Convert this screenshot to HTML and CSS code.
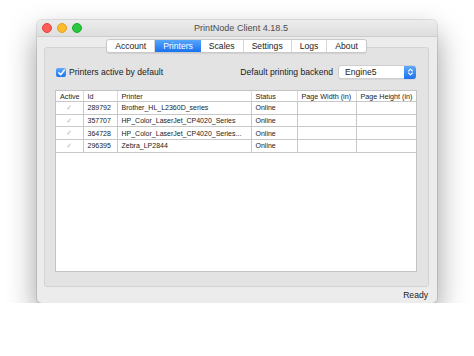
FILE: index.html
```html
<!DOCTYPE html>
<html lang="en">
<head>
    <meta charset="UTF-8">
    <title>PrintNode Client 4.18.5</title>
    <link rel="stylesheet" href="styles.css">
</head>
<body>
    <div class="window">
        <div class="titlebar">
            <div class="lights">
                <span class="light red"></span>
                <span class="light yellow"></span>
                <span class="light green"></span>
            </div>
            <div class="title">PrintNode Client 4.18.5</div>
        </div>

        <div class="content">
            <div class="panel">
                <div class="tabs">
                    <span class="tab">Account</span>
                    <span class="tab active">Printers</span>
                    <span class="tab">Scales</span>
                    <span class="tab">Settings</span>
                    <span class="tab">Logs</span>
                    <span class="tab">About</span>
                </div>

                <div class="options">
                    <label class="check">
                        <span class="checkbox">
                            <svg width="9" height="9" viewBox="0 0 9 9"><path d="M1.8 4.7 L3.7 6.7 L7.4 2" fill="none" stroke="#fff" stroke-width="1.5" stroke-linecap="round" stroke-linejoin="round"/></svg>
                        </span>
                        Printers active by default
                    </label>
                    <div class="backend">
                        <span>Default printing backend</span>
                        <div class="select">
                            <span class="select-value">Engine5</span>
                            <span class="stepper">
                                <svg width="7" height="10" viewBox="0 0 7 10"><path d="M1.6 4 L3.5 2.2 L5.4 4 M1.6 6 L3.5 7.8 L5.4 6" fill="none" stroke="#fff" stroke-width="1.1" stroke-linecap="round" stroke-linejoin="round"/></svg>
                            </span>
                        </div>
                    </div>
                </div>

                <div class="table-wrap">
                    <table class="printers">
                        <colgroup>
                            <col style="width: 27px">
                            <col style="width: 34px">
                            <col style="width: 134px">
                            <col style="width: 46px">
                            <col style="width: 59px">
                            <col>
                        </colgroup>
                        <thead>
                            <tr>
                                <th>Active</th>
                                <th>Id</th>
                                <th>Printer</th>
                                <th>Status</th>
                                <th>Page Width (in)</th>
                                <th>Page Height (in)</th>
                            </tr>
                        </thead>
                        <tbody>
                            <tr>
                                <td class="tick">&#10003;</td>
                                <td>289792</td>
                                <td>Brother_HL_L2360D_series</td>
                                <td>Online</td>
                                <td></td>
                                <td></td>
                            </tr>
                            <tr>
                                <td class="tick">&#10003;</td>
                                <td>357707</td>
                                <td>HP_Color_LaserJet_CP4020_Series</td>
                                <td>Online</td>
                                <td></td>
                                <td></td>
                            </tr>
                            <tr>
                                <td class="tick">&#10003;</td>
                                <td>364728</td>
                                <td>HP_Color_LaserJet_CP4020_Series...</td>
                                <td>Online</td>
                                <td></td>
                                <td></td>
                            </tr>
                            <tr>
                                <td class="tick">&#10003;</td>
                                <td>296395</td>
                                <td>Zebra_LP2844</td>
                                <td>Online</td>
                                <td></td>
                                <td></td>
                            </tr>
                        </tbody>
                    </table>
                </div>
            </div>

            <div class="statusbar">Ready</div>
        </div>
    </div>
</body>
</html>
```

FILE: styles.css
```css
body {
    margin: 0;
    padding: 0;
    background: #fff;
    font-family: "Liberation Sans", Arial, sans-serif;
    font-size: 8.6px;
    color: #1a1a1a;
}
.window {
    width: 400px;
    height: 283px;
    margin: 20px 0 0 37px;
    background: #ececec;
    border-radius: 5px;
    box-shadow: 0 14px 30px rgba(0, 0, 0, 0.4), 0 0 0 1px rgba(0, 0, 0, 0.1);
    display: flex;
    flex-direction: column;
    overflow: hidden;
}
.titlebar {
    height: 16px;
    background: linear-gradient(#ececec, #dedede);
    border-bottom: 1px solid #cdcdcd;
    display: flex;
    align-items: center;
}
.lights {
    display: flex;
    gap: 5px;
    padding-left: 5px;
}
.light {
    width: 8px;
    height: 8px;
    border-radius: 50%;
}
.red { background: #fc5f57; border: 0.5px solid #e0443e; }
.yellow { background: #fdbc2e; border: 0.5px solid #dea123; }
.green { background: #29c840; border: 0.5px solid #1aab29; }
.title {
    flex: 1;
    text-align: center;
    color: #4d4d4d;
    font-size: 9.1px;
    margin-right: 37px;
}
.content {
    flex: 1;
    display: flex;
    flex-direction: column;
}
.panel {
    margin: 10px 8px 0 7px;
    height: 238px;
    background: #e3e3e3;
    border: 1px solid #d3d3d3;
    border-radius: 3px;
    display: flex;
    flex-direction: column;
}
.tabs {
    display: flex;
    align-self: center;
    margin-top: -9px;
    background: #fff;
    border: 1px solid #c8c8c8;
    border-radius: 3px;
    box-shadow: 0 1px 1px rgba(0, 0, 0, 0.08);
    height: 12px;
}
.tab {
    padding: 0 8px;
    line-height: 12px;
    border-right: 1px solid #d6d6d6;
    color: #222;
}
.tab:last-child {
    border-right: none;
}
.tab.active {
    background: linear-gradient(#56a6fb, #1a72f0);
    color: #fff;
    border-right: none;
}
.options {
    display: flex;
    justify-content: space-between;
    align-items: center;
    padding: 12px 12px 0 11px;
    height: 14px;
}
.check {
    display: flex;
    align-items: center;
    gap: 3px;
}
.checkbox {
    width: 10px;
    height: 9px;
    border-radius: 2px;
    background: linear-gradient(#5ea9fa, #1c74ef);
    display: flex;
    align-items: center;
    justify-content: center;
}
.backend {
    display: flex;
    align-items: center;
    gap: 5px;
}
.select {
    width: 76px;
    height: 12px;
    background: #fff;
    border: 1px solid #cfcfcf;
    border-radius: 3px;
    display: flex;
    align-items: center;
    box-shadow: 0 1px 1px rgba(0, 0, 0, 0.06);
}
.select-value {
    flex: 1;
    padding-left: 6px;
}
.stepper {
    width: 12px;
    height: 13px;
    margin-right: -1px;
    background: linear-gradient(#5ea9fa, #1c74ef);
    border-radius: 0 3px 3px 0;
    display: flex;
    align-items: center;
    justify-content: center;
}
.table-wrap {
    margin: 11px 11px 0 10px;
    height: 180px;
    background: #fff;
    border: 1px solid #c4c4c4;
}
.printers {
    border-collapse: collapse;
    width: 100%;
    font-size: 7px;
    table-layout: fixed;
}
.printers th {
    font-weight: normal;
    font-size: 7.2px;
    text-align: left;
    padding: 0 4px;
    height: 10px;
    border-right: 1px solid #dadada;
    border-bottom: 1px solid #c8c8c8;
    color: #222;
    white-space: nowrap;
}
.printers th:last-child {
    border-right: none;
}
.printers td {
    padding: 0 4px;
    height: 11.7px;
    border: 1px solid #c8c8c8;
    white-space: nowrap;
    overflow: hidden;
    color: #222;
}
.printers td:first-child {
    border-left: none;
}
.printers td:last-child {
    border-right: none;
}
.printers .tick {
    color: #b4b4b4;
    text-align: center;
    font-family: "DejaVu Sans", sans-serif;
    font-size: 7px;
}
.statusbar {
    flex: 1;
    text-align: right;
    padding: 3px 9px 0 0;
    color: #222;
}
```
